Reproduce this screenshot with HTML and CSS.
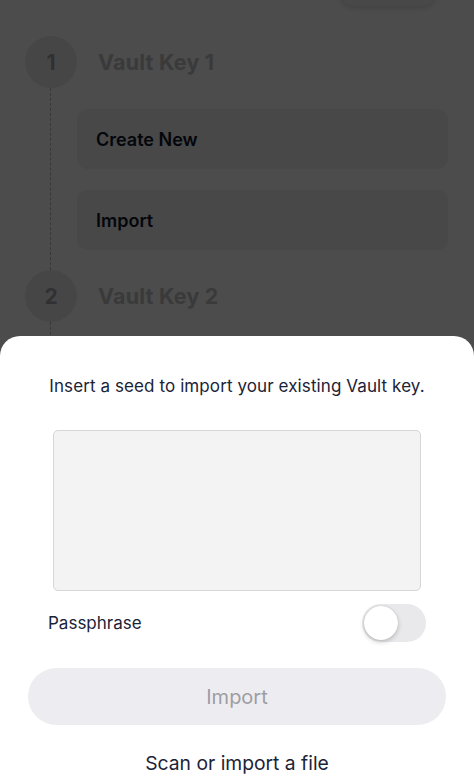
FILE: index.html
```html
<!DOCTYPE html>
<html lang="en">
<head>
    <meta charset="UTF-8">
    <meta name="viewport" content="width=device-width, initial-scale=1.0">
    <title>Vault Keys</title>
    <link rel="stylesheet" href="styles.css">
</head>
<body>
    <div class="screen">
        <div class="top-bar">
            <div class="top-button"></div>
        </div>

        <div class="steps">
            <div class="step">
                <div class="step-head">
                    <div class="step-num">1</div>
                    <div class="step-title">Vault Key 1</div>
                </div>
                <div class="step-body">
                    <div class="option">Create New</div>
                    <div class="option">Import</div>
                </div>
            </div>
            <div class="step">
                <div class="step-head">
                    <div class="step-num">2</div>
                    <div class="step-title">Vault Key 2</div>
                </div>
                <div class="step-body"></div>
            </div>
        </div>

        <!-- dim layer behind the sheet -->
        <div class="backdrop"></div>

        <div class="sheet">
            <p class="sheet-text">Insert a seed to import your existing Vault key.</p>
            <textarea class="seed-input"></textarea>
            <div class="switch-row">
                <span>Passphrase</span>
                <div class="switch"><div class="knob"></div></div>
            </div>
            <button class="import-btn" disabled>Import</button>
            <div class="scan-link">Scan or import a file</div>
        </div>
    </div>
</body>
</html>
```

FILE: styles.css
```css
* {
    box-sizing: border-box;
}

body {
    margin: 0;
    font-family: Inter, 'Noto Sans', sans-serif;
    background: #ffffff;
}

.screen {
    position: relative;
    width: 474px;
    height: 777px;
    overflow: hidden;
    background: #ffffff;
}

.top-bar {
    height: 26px;
    display: flex;
    justify-content: flex-end;
    padding-right: 38px;
}

.top-button {
    width: 96px;
    height: 30px;
    margin-top: -24px;
    border-radius: 14px;
    background: #f2f2f2;
    box-shadow: 0 2px 6px rgba(0,0,0,0.15);
}

.steps {
    padding: 10px 26px 0 25px;
}

.step-head {
    display: flex;
    align-items: center;
    gap: 21px;
    height: 52px;
}

.step-num {
    width: 52px;
    height: 52px;
    border-radius: 50%;
    background: #ececee;
    color: #a6a6aa;
    font-size: 21px;
    font-weight: 700;
    display: flex;
    align-items: center;
    justify-content: center;
}

.step-title {
    font-size: 21.5px;
    font-weight: 700;
    color: #c2c2c6;
    letter-spacing: 0.2px;
}

.step-body {
    margin-left: 25px;
    border-left: 1px dashed #b8b8b8;
    padding: 21px 0 20px 26px;
    display: flex;
    flex-direction: column;
    gap: 21px;
}

.option {
    height: 60px;
    border-radius: 10px;
    background: #f1f1f3;
    padding: 0 19px;
    display: flex;
    align-items: center;
    font-size: 18px;
    font-weight: 600;
    color: #0f1629;
}

.backdrop {
    position: absolute;
    inset: 0;
    background: rgba(0, 0, 0, 0.7);
}

.sheet {
    position: absolute;
    left: 0;
    right: 0;
    bottom: 0;
    height: 441px;
    background: #ffffff;
    border-radius: 20px 20px 0 0;
    padding: 38px 28px 0;
    display: flex;
    flex-direction: column;
    align-items: center;
    color: #1b2337;
}

.sheet-text {
    margin: 0;
    font-size: 17px;
    line-height: 24px;
    letter-spacing: 0.1px;
    text-align: center;
}

.seed-input {
    width: 368px;
    height: 161px;
    margin-top: 32px;
    background: #f3f3f3;
    border: 1px solid #d6d6d6;
    border-radius: 5px;
    resize: none;
    font-family: inherit;
}

.switch-row {
    width: 100%;
    margin-top: 13px;
    padding: 0 20px;
    display: flex;
    justify-content: space-between;
    align-items: center;
    font-size: 17px;
}

.switch {
    width: 64px;
    height: 38px;
    border-radius: 19px;
    background: #e9e9eb;
    padding: 2px;
}

.knob {
    width: 34px;
    height: 34px;
    border-radius: 50%;
    background: #ffffff;
    box-shadow: 0 2px 5px rgba(0,0,0,0.2), 0 0 1px rgba(0,0,0,0.2);
}

.import-btn {
    width: 100%;
    height: 57px;
    margin-top: 26px;
    border: none;
    border-radius: 29px;
    background: #ededf1;
    color: #9d9da3;
    font-family: inherit;
    font-size: 20px;
}

.scan-link {
    margin-top: 25px;
    font-size: 19.3px;
    line-height: 26px;
    color: #1b2337;
}
```
